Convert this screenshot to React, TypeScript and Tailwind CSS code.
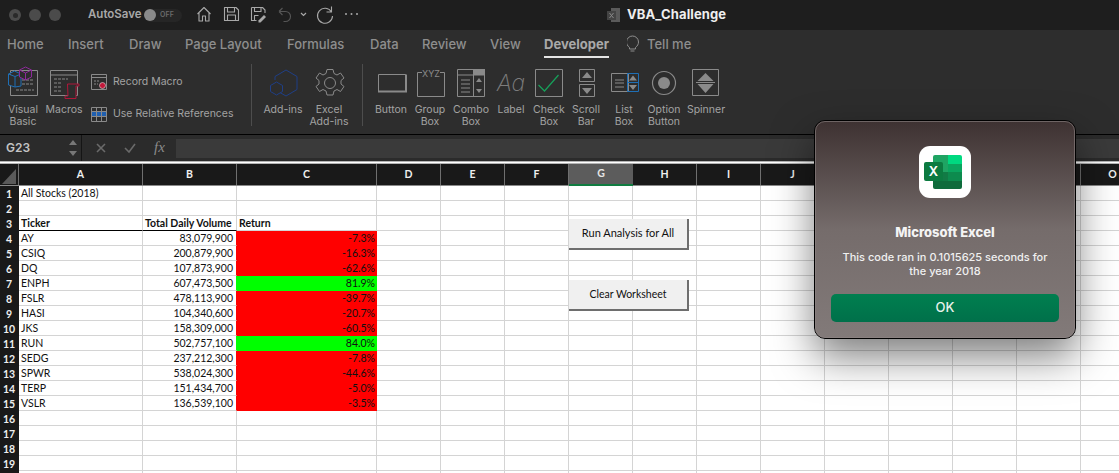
import React from "react";

const Ico = ({ x, w, children }: { x: number; w: number; children: React.ReactNode }) => (
  <svg width={w} height={34} viewBox={`${x} 66 ${w} 34`} fill="none" className="overflow-visible block shrink-0">
    {children}
  </svg>
);

const G = "#8a8a8a";

const RibbonItem = ({ w, label, x, children }: { w: number; label: string[]; x: number; children: React.ReactNode }) => (
  <div className="flex flex-col items-center shrink-0" style={{ width: w }}>
    <Ico x={x} w={w}>{children}</Ico>
    <div className="mt-[4px] text-center text-[10.5px] leading-[12px] text-[#a3a3a3] whitespace-nowrap">
      {label.map((l) => <div key={l}>{l}</div>)}
    </div>
  </div>
);

const tabs: [string, number][] = [
  ["Home", 61], ["Insert", 61], ["Draw", 56], ["Page Layout", 102], ["Formulas", 83], ["Data", 52], ["Review", 68], ["View", 54],
];

const TitleBar = () => (
  <div className="h-[30px] bg-[#1e1e1e] flex items-center relative shrink-0">
    <div className="flex gap-2 pl-[9px]">
      {[0, 1, 2].map((i) => (
        <div key={i} className="w-3 h-3 rounded-full bg-[#4b4b4b] flex items-center justify-center">
          {i === 0 && <div className="w-[5px] h-[5px] rounded-full bg-[#2a2a2a]" />}
        </div>
      ))}
    </div>
    <div className="ml-[27px] text-[11.5px] font-semibold text-[#a8a8a8] w-[56px]">AutoSave</div>
    <div className="w-[38px] h-[13px] rounded-full bg-[#262626] flex items-center">
      <div className="w-3 h-3 rounded-full bg-[#8a8a8a]" />
      <span className="ml-[4px] text-[7px] font-semibold tracking-wide text-[#6b6b6b]">OFF</span>
    </div>
    <svg width="190" height="30" viewBox="190 0 190 30" fill="none" stroke="#a8a8a8" strokeWidth="1.1" className="ml-[8px]">
      <path d="M197.500 14 204 7.500l6.500 6.500M199 12.500V21h3.500v-5h3v5h3.500v-8.500" strokeLinejoin="round" />
      <path d="M224.500 7.500h11.500l2.500 2.500v10.500h-14zM227.500 7.500v4.500h7V7.500M227.500 20.500V15h8v5.500" strokeLinejoin="round" />
      <path d="M251.500 7.500h11l2.500 2.500v3M251.500 7.500v13h5M254.500 7.500v4h6.500v-4M254.500 20v-4.500h4" strokeLinejoin="round" />
      <path d="M258.500 20.500l5.500-5.500 2 2-5.500 5.500h-2z" fill="#a8a8a8" stroke="none" />
      <path d="M279 11.500h6.500a5 5 0 0 1 0 10h-2M279 11.500l3.500-3.500M279 11.500l3.500 3.500" stroke="#565656" />
      <path d="M301 13l2.500 2.500 2.500-2.500" strokeWidth="1.200" />
      <path d="M331.500 12a7.500 7.500 0 1 0 1 4M331.500 6.500V12h-5" />
      <circle cx="346" cy="14" r="1" fill="#a8a8a8" stroke="none" />
      <circle cx="351.500" cy="14" r="1" fill="#a8a8a8" stroke="none" />
      <circle cx="357" cy="14" r="1" fill="#a8a8a8" stroke="none" />
    </svg>
    <div className="absolute left-[607px] top-0 h-[30px] flex items-center">
      <svg width="16" height="16" viewBox="0 0 16 16" className="mr-[4px]">
        <rect x="4" y="1" width="9" height="14" fill="#5a5a5a" />
        <rect x="0" y="4" width="9" height="9" fill="#444" />
        <path d="M2.500 6l4 5M6.500 6l-4 5" stroke="#8a8a8a" strokeWidth="1" />
      </svg>
      <span className="text-[13px] font-bold text-[#efefef] tracking-[0.1px]">VBA_Challenge</span>
    </div>
  </div>
);

const Tabs = () => (
  <div className="h-[30px] flex pl-[7px] text-[13px] font-medium text-[#8e8e8e] shrink-0">
    {tabs.map(([t, w]) => (
      <div key={t} className="pt-[6px] leading-[16px] shrink-0" style={{ width: w }}>{t}</div>
    ))}
    <div className="w-[83px] shrink-0">
      <div className="inline-block h-[28px] pt-[6px] leading-[16px] font-bold text-[#a9a9a9] border-b-2 border-[#e4e4e4]">Developer</div>
    </div>
    <svg width="20" height="30" viewBox="627 30 20 30" fill="none" stroke="#8e8e8e" strokeWidth="1" className="shrink-0">
      <path d="M630 50.500c-2-1.500-3-3.500-3-5.500a6 6 0 0 1 12 0c0 2-1 4-3 5.500v1.500h-6zM631 54h4" transform="translate(-.5 -3)" />
    </svg>
    <div className="pt-[6px] leading-[16px]">Tell me</div>
  </div>
);

const Ribbon = () => (
  <div className="h-[74px] flex pl-[2px] pt-[6px] shrink-0">
    <RibbonItem w={42} x={2} label={["Visual", "Basic"]}>
      <path d="M10.500 70.500h27v25h-27z" stroke={G} />
      <path d="M22 80h12M22 84h12M16 90h18" stroke={G} strokeDasharray="3 1" />
      <path d="M8.500 74l6-3 6.500 3v12l-6 1-6.500-2zM8.500 74l6.500 2.500 6-2.500M15 76.500V87" stroke="#1f6fb5" fill="#2d2d2d" />
      <path d="M19.500 70l6-3 6 3v7l-6 3-6-3zM19.500 70l6 3 6-3M25.500 73v7" stroke="#8d2a9a" fill="#2d2d2d" />
    </RibbonItem>
    <RibbonItem w={40} x={44} label={["Macros"]}>
      <path d="M50.500 70.500h27v25h-27zM50.500 75h27" stroke={G} />
      <path d="M54 79h14M54 83h8M54 87h8M54 91h8" stroke={G} strokeDasharray="3 1" />
      <path d="M67.500 84h11.500v2h-3v12.500h-11v-2.500h3z" stroke="#b0173a" fill="#2d2d2d" />
    </RibbonItem>
    <div className="w-[160px] shrink-0 pl-[7px] flex flex-col text-[10.5px] text-[#a3a3a3]">
      <div className="flex items-center h-[16px] mt-[8px]">
        <svg width="16" height="16" viewBox="91 73 16 16" fill="none" className="shrink-0">
          <path d="M91.500 73.500h15v15h-15zM91.500 76.500h15" stroke={G} />
          <path d="M94 80h5M94 83h4" stroke={G} strokeDasharray="2 1" />
          <circle cx="102.500" cy="84.500" r="3" fill="#c2183a" stroke="#ddd" strokeWidth=".6" />
        </svg>
        <span className="ml-[6px]">Record Macro</span>
      </div>
      <div className="flex items-center h-[16px] mt-[16px]">
        <svg width="16" height="15" viewBox="91 106 16 15" fill="none" className="shrink-0">
          <rect x="92" y="110.500" width="14" height="5" fill="#1f5fb0" />
          <path d="M91.500 106.500h15v14h-15zM91.500 110.500h15M91.500 115.500h15M96.500 106.500v14M101.500 106.500v14" stroke={G} />
        </svg>
        <span className="ml-[6px] whitespace-nowrap">Use Relative References</span>
      </div>
    </div>
    <div className="w-px h-[62px] -mt-[2px] ml-[7px] bg-[#4d4d4d] shrink-0" />
    <div className="ml-[8px] flex">
      <RibbonItem w={46} x={260} label={["Add-ins"]}>
        <path d="M286 70l11 6.500v13l-11 6.500-7-4M275 80v-3.500l11-6.500" stroke="#1f3f86" />
        <path d="M276.500 83.500l6 3.500v6l-6 3.500-6-3.500v-6z" stroke="#1f3f86" fill="#2d2d2d" transform="translate(0 -1.500)" />
      </RibbonItem>
      <RibbonItem w={46} x={306} label={["Excel", "Add-ins"]}>
        <path d="M327 69.500h6l1 4 3 1.500 3.500-2 3.500 5-3 2.500v3.500l3 2.500-3.500 5-3.500-2-3 1.500-1 4h-6l-1-4-3-1.500-3.500 2-3.500-5 3-2.500v-3.500l-3-2.500 3.500-5 3.500 2 3-1.500z" stroke={G} />
        <circle cx="330" cy="83" r="5.500" stroke={G} />
      </RibbonItem>
    </div>
    <div className="w-px h-[62px] -mt-[2px] ml-[10px] bg-[#4d4d4d] shrink-0" />
    <div className="ml-[9px] flex">
      <RibbonItem w={38} x={372} label={["Button"]}>
        <path d="M378.500 74.500h27v17h-27z" stroke={G} />
        <path d="M378 91.500h28v-17" stroke={G} strokeWidth="2" />
      </RibbonItem>
      <RibbonItem w={40} x={410} label={["Group", "Box"]}>
        <path d="M422 72.500h-4.500v24h27v-24H440" stroke={G} />
        <text x="431" y="77" textAnchor="middle" fontSize="9" fill={G} fontFamily="Inter, sans-serif">XYZ</text>
      </RibbonItem>
      <RibbonItem w={42} x={450} label={["Combo", "Box"]}>
        <path d="M457.500 69.500h27v27h-27zM457.500 75h27M473.500 75v21.500" stroke={G} />
        <rect x="473" y="69" width="12" height="6" fill={G} />
        <path d="M461 80h9M461 84h9M461 88h9M461 92h9" stroke={G} />
        <path d="M479 78l3 4h-6zM479 93l3-4h-6z" fill={G} />
      </RibbonItem>
      <div className="w-[38px] shrink-0 flex flex-col items-center">
        <div className="h-[34px] text-[23px] leading-[34px] italic font-extralight text-[#7c7c7c]" style={{ fontFamily: "Inter, sans-serif" }}>Aa</div>
        <div className="mt-[4px] text-[10.5px] leading-[12px] text-[#a3a3a3]">Label</div>
      </div>
      <RibbonItem w={38} x={530} label={["Check", "Box"]}>
        <path d="M535.500 69.500h27v27h-27z" stroke={G} />
        <path d="M538.500 85l6 6 14-16" stroke="#17a05a" strokeWidth="1.200" />
      </RibbonItem>
      <RibbonItem w={36} x={568} label={["Scroll", "Bar"]}>
        <path d="M579.500 69.500h15v12h-15zM579.500 84.500h15v12h-15z" stroke={G} />
        <path d="M587 72l5 6h-10zM587 94l5-6h-10z" fill={G} />
      </RibbonItem>
      <RibbonItem w={40} x={604} label={["List", "Box"]}>
        <path d="M611.500 73.500h17v18h-17zM615 80h9M615 83h9M615 87h9" stroke={G} />
        <path d="M627.500 73.500h11v18h-11zM627.500 82.500h11" stroke="#1f6fb5" />
        <path d="M633 75.500l4 5h-8zM633 90l4-5h-8z" fill={G} />
      </RibbonItem>
      <RibbonItem w={40} x={644} label={["Option", "Button"]}>
        <circle cx="664" cy="83" r="11.500" stroke={G} strokeWidth="1.200" />
        <circle cx="664" cy="83" r="6" fill={G} />
      </RibbonItem>
      <RibbonItem w={44} x={684} label={["Spinner"]}>
        <path d="M692.500 69.500h26v26h-26zM696 82.500h19" stroke={G} />
        <path d="M705.500 73l8 8h-16zM705.500 93l8-9h-16z" fill={G} />
      </RibbonItem>
    </div>
  </div>
);

const FormulaBar = () => (
  <div className="h-[27px] flex border-t border-black bg-[#2b2b2b] shrink-0">
    <div className="w-[81px] pl-[6px] flex items-center justify-between pr-[3px] text-[12px] font-semibold text-[#c4c4c4]">
      <span>G23</span>
      <svg width="10" height="18" viewBox="0 0 10 18" fill="#777">
        <path d="M5 1l4 5H1zM5 17l4-5H1z" />
      </svg>
    </div>
    <div className="w-px bg-[#151515]" />
    <div className="flex-1 flex items-center">
      <svg width="94" height="26" viewBox="82 135 94 26" fill="none" stroke="#6a6a6a" strokeWidth="1.600" className="shrink-0">
        <path d="M97 144l8 8M105 144l-8 8M125 148l4 4 6-8" />
      </svg>
      <div className="w-0 overflow-visible relative">
        <span className="absolute -left-[22px] -top-[11px] italic text-[#8a8a8a] text-[15px] leading-[20px]" style={{ fontFamily: '"Liberation Serif", serif' }}>fx</span>
      </div>
      <div className="flex-1 h-[19px] bg-[#3a3a3a] ml-0" />
    </div>
  </div>
);

const columns: [string, number][] = [
  ["A", 124], ["B", 94], ["C", 140], ["D", 64], ["E", 64], ["F", 64], ["G", 64], ["H", 64], ["I", 64], ["J", 64], ["K", 64], ["L", 64], ["M", 64], ["N", 64], ["O", 64],
];

type Row = [string, string, string, "r" | "g"];
const data: Row[] = [
  ["AY", "83,079,900", "-7.3%", "r"],
  ["CSIQ", "200,879,900", "-16.3%", "r"],
  ["DQ", "107,873,900", "-62.6%", "r"],
  ["ENPH", "607,473,500", "81.9%", "g"],
  ["FSLR", "478,113,900", "-39.7%", "r"],
  ["HASI", "104,340,600", "-20.7%", "r"],
  ["JKS", "158,309,000", "-60.5%", "r"],
  ["RUN", "502,757,100", "84.0%", "g"],
  ["SEDG", "237,212,300", "-7.8%", "r"],
  ["SPWR", "538,024,300", "-44.6%", "r"],
  ["TERP", "151,434,700", "-5.0%", "r"],
  ["VSLR", "136,539,100", "-3.5%", "r"],
];

const Sheet = () => {
  const rows = Array.from({ length: 20 }, (_, i) => i + 1);
  return (
    <div className="flex-1 min-h-0 overflow-hidden bg-white" style={{ fontFamily: "Lato, sans-serif" }}>
      <div className="h-[3px] border-y border-[#b5b5b5] bg-white" />
      <div className="flex h-[22px] bg-[#191919] border-b border-[#8a8a8a] text-[10.5px] font-bold text-[#efefef] w-[1200px]">
        <div className="w-[19px] shrink-0 border-r border-[#6f6f6f] relative overflow-hidden">
          <svg width="18" height="21" className="absolute inset-0"><path d="M16 5v15H2z" fill="#5a5a5a" /></svg>
        </div>
        {columns.map(([c, w]) => (
          <div
            key={c}
            className={
              c === "G"
                ? "shrink-0 flex items-center justify-center bg-[#5c5c5c] text-[#e5e5e5] border-b-2 border-[#107c41] -mb-px"
                : "shrink-0 flex items-center justify-center border-r border-[#6f6f6f]"
            }
            style={{ width: w }}
          >
            {c}
          </div>
        ))}
      </div>
      {rows.map((n) => {
        const d = n >= 4 && n <= 15 ? data[n - 4] : null;
        const bold = n === 3;
        const colored = d ? (d[3] === "r" ? "bg-[#ff0000]" : "bg-[#00ff00]") : "";
        return (
          <div key={n} className="flex h-[15px] w-[1200px] text-[10.5px] leading-[14px] text-[#111]">
            <div className="w-[19px] shrink-0 bg-[#191919] border-r border-[#191919] flex items-center justify-center text-[10.5px] font-bold text-[#efefef]">{n < 20 ? n : ""}</div>
            <div className={`w-[124px] shrink-0 border-r border-[#d4d4d4] border-b pl-[2px] whitespace-nowrap ${n === 3 ? "border-b-black font-bold" : "border-b-[#d4d4d4]"}`}>
              {n === 1 ? "All Stocks (2018)" : n === 3 ? "Ticker" : d ? d[0] : ""}
            </div>
            <div className={`w-[94px] shrink-0 border-r border-b whitespace-nowrap ${n === 3 ? "border-b-black border-r-[#d4d4d4] font-bold pl-[2px] text-left" : d ? `text-right pr-[3px] border-b-[#d4d4d4] ${d[3] === "r" ? "border-r-[#ff0000]" : "border-r-[#00ff00]"}` : "border-[#d4d4d4]"}`}>
              {n === 3 ? "Total Daily Volume" : d ? d[1] : ""}
            </div>
            <div className={`w-[140px] shrink-0 ${d ? colored : "border-r border-b border-[#d4d4d4]"} ${bold ? "font-bold pl-[2px]" : "text-right pr-[2px]"}`}>
              {n === 3 ? "Return" : d ? d[2] : ""}
            </div>
            {columns.slice(3).map(([c, w]) => (
              <div key={c} className="shrink-0 border-r border-b border-[#d4d4d4]" style={{ width: w }} />
            ))}
          </div>
        );
      })}
    </div>
  );
};

const SheetButton = ({ label, top, size }: { label: string; top: string; size: string }) => (
  <div className={`absolute left-[569px] ${top} ${size} w-[120px] h-[31px] bg-[#f0f0f0] border-r-2 border-b-2 border-[#6e6e6e] flex items-center justify-center text-[#111]`} style={{ fontFamily: "Lato, sans-serif" }}>
    {label}
  </div>
);

const Dialog = () => (
  <div
    className="absolute left-[814px] top-[120px] w-[262px] h-[219px] rounded-[11px] border border-black bg-gradient-to-b from-[#3e3232] via-[#756c6b] via-50% to-[#827a79] shadow-[0_18px_40px_rgba(0,0,0,0.5)] flex flex-col items-center text-white"
    style={{ fontFamily: "Inter, sans-serif" }}
  >
    <div className="absolute inset-0 rounded-[10px] border border-[#8f8686]/60 pointer-events-none" />
    <div className="mt-[25px] w-[52px] h-[52px] rounded-[11px] bg-white relative overflow-hidden shrink-0">
      <div className="absolute left-[14px] top-[9px] w-[29px] h-[34px] grid grid-cols-2 grid-rows-4 rounded-[2px] overflow-hidden">
        <div className="bg-[#1fa463]" /><div className="bg-[#00d980]" />
        <div className="bg-[#1fa463]" /><div className="bg-[#0ba55f]" />
        <div className="bg-[#127a45]" /><div className="bg-[#0d8b4e]" />
        <div className="bg-[#0f6b3c]" /><div className="bg-[#0f6b3c]" />
      </div>
      <div className="absolute left-[5px] top-[16px] w-[19px] h-[19px] rounded-[2px] bg-[#0c7a40] flex items-center justify-center text-[13px] font-semibold text-white">X</div>
    </div>
    <div className="mt-[26px] text-[13px] leading-[16px] font-extrabold text-[#f4f4f4]">Microsoft Excel</div>
    <div className="mt-[10px] w-[220px] text-center text-[11px] leading-[14px] text-[#f0f0f0] font-medium">
      This code ran in 0.1015625 seconds for the year 2018
    </div>
    <div className="mt-[16px] w-[228px] h-[28px] rounded-[5px] bg-gradient-to-b from-[#007f4f] to-[#00704a] flex items-center justify-center text-[13px] font-medium text-[#e8f2ec]">
      OK
    </div>
  </div>
);

export default function App() {
  return (
    <div className="relative w-[1119px] h-[473px] overflow-hidden bg-[#2d2d2d] flex flex-col" style={{ fontFamily: "Inter, sans-serif" }}>
      <TitleBar />
      <Tabs />
      <Ribbon />
      <FormulaBar />
      <Sheet />
      <SheetButton label="Run Analysis for All" top="top-[219px]" size="text-[11px]" />
      <SheetButton label="Clear Worksheet" top="top-[280px]" size="text-[10.5px]" />
      <Dialog />
    </div>
  );
}
